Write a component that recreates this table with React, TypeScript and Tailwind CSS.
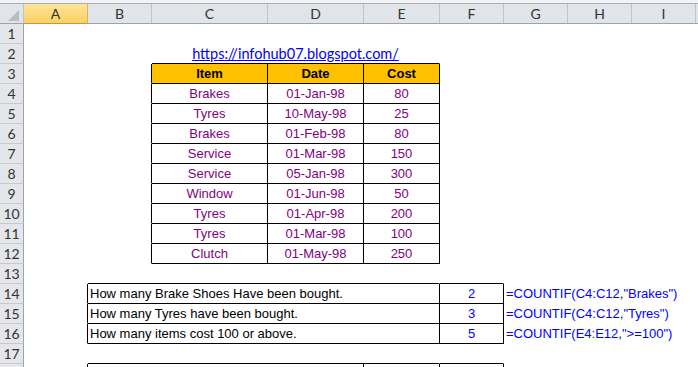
import React, { ReactNode } from "react";
import clsx from "clsx";

type CellProps = {
  w: string;
  r?: boolean;
  b?: boolean;
  bg?: string;
  cls?: string;
  children?: ReactNode;
};

const Cell = ({ w, r, b, bg = "", cls = "", children }: CellProps) => (
  <div
    className={clsx(
      "box-border h-full shrink-0 border-r border-b flex items-center",
      w,
      bg,
      r ? "border-r-black" : "border-r-transparent",
      b ? "border-b-black" : "border-b-transparent",
      cls
    )}
  >
    {children}
  </div>
);

const RowHdr = ({ n }: { n: number }) => (
  <div className="box-border h-full w-[24px] shrink-0 border-r border-b border-r-[#9ea3aa] border-b-[#c6cad0] bg-[#e4e6ea] flex items-center justify-center font-['Lato','Open_Sans',sans-serif] text-[14px] text-[#333]">
    {n}
  </div>
);

const Row = ({ n, children }: { n: number; children?: ReactNode }) => (
  <div className="flex h-[20px]">
    <RowHdr n={n} />
    {children}
    <div className="flex-1" />
  </div>
);

const dataFont = "font-['Liberation_Sans',Arial,sans-serif] text-[13px]";
const purple = "text-[#800080] justify-center";

const data = [
  ["Brakes", "01-Jan-98", "80"],
  ["Tyres", "10-May-98", "25"],
  ["Brakes", "01-Feb-98", "80"],
  ["Service", "01-Mar-98", "150"],
  ["Service", "05-Jan-98", "300"],
  ["Window", "01-Jun-98", "50"],
  ["Tyres", "01-Apr-98", "200"],
  ["Tyres", "01-Mar-98", "100"],
  ["Clutch", "01-May-98", "250"],
];

const questions = [
  ["How many Brake Shoes Have been bought.", "2", '=COUNTIF(C4:C12,"Brakes")'],
  ["How many Tyres have been bought.", "3", '=COUNTIF(C4:C12,"Tyres")'],
  ["How many items cost 100 or above.", "5", '=COUNTIF(E4:E12,">=100")'],
];

const colHdrs: [string, string][] = [
  ["B", "w-[64px]"],
  ["C", "w-[116px]"],
  ["D", "w-[96px]"],
  ["E", "w-[76px]"],
  ["F", "w-[64px]"],
  ["G", "w-[64px]"],
  ["H", "w-[64px]"],
  ["I", "w-[64px]"],
];

export default function App() {
  return (
    <div className={clsx("w-[698px] h-[367px] overflow-hidden bg-white", dataFont)}>
      <div className="h-[3px] bg-[#f2f3f5]" />
      {/* column header */}
      <div className="flex h-[21px] box-border border-t border-b border-t-[#a9adb3] border-b-[#9ea3aa] bg-[#e1e4e8] font-['Lato','Open_Sans',sans-serif] text-[14px] text-[#333]">
        <div className="relative box-border h-full w-[24px] shrink-0 border-r border-r-[#c0c4ca]">
          <svg className="absolute right-[4px] bottom-[2px]" width="11" height="11" viewBox="0 0 11 11">
            <polygon points="11,0 11,11 0,11" fill="#b9bdc3" />
          </svg>
        </div>
        <div className="box-border h-[20px] -mb-px w-[64px] shrink-0 border-r border-b border-r-[#dcb34f] border-b-[#c2993f] bg-gradient-to-b from-[#fde49a] to-[#fbd25f] flex items-center justify-center">
          A
        </div>
        {colHdrs.map(([l, w]) => (
          <div key={l} className={clsx("box-border h-full shrink-0 border-r border-r-[#c0c4ca] flex items-center justify-center", w)}>
            {l}
          </div>
        ))}
        <div className="flex-1" />
      </div>

      <Row n={1} />
      <Row n={2}>
        <Cell w="w-[64px]" />
        <Cell w="w-[64px]" />
        <Cell w="w-[288px]" b cls="justify-center items-end">
          <span className="font-['Lato','Open_Sans',sans-serif] text-[14.5px] text-[#0000ff] underline leading-[18px]">
            https://infohub07.blogspot.com/
          </span>
        </Cell>
      </Row>
      <Row n={3}>
        <Cell w="w-[64px]" />
        <Cell w="w-[64px]" r />
        <Cell w="w-[116px]" r b bg="bg-[#ffc000]" cls="justify-center font-bold text-black">Item</Cell>
        <Cell w="w-[96px]" r b bg="bg-[#ffc000]" cls="justify-center font-bold text-black">Date</Cell>
        <Cell w="w-[76px]" r b bg="bg-[#ffc000]" cls="justify-center font-bold text-black">Cost</Cell>
      </Row>
      {data.map(([item, date, cost], i) => (
        <Row key={i} n={4 + i}>
          <Cell w="w-[64px]" />
          <Cell w="w-[64px]" r />
          <Cell w="w-[116px]" r b cls={purple}>{item}</Cell>
          <Cell w="w-[96px]" r b cls={purple}>{date}</Cell>
          <Cell w="w-[76px]" r b cls={purple}>{cost}</Cell>
        </Row>
      ))}
      <Row n={13}>
        <Cell w="w-[64px]" />
        <Cell w="w-[352px]" b />
        <Cell w="w-[64px]" b />
      </Row>
      {questions.map(([q, n, f], i) => (
        <Row key={i} n={14 + i}>
          <Cell w="w-[64px]" r />
          <Cell w="w-[352px]" r b cls="pl-[2px] text-black whitespace-nowrap">{q}</Cell>
          <Cell w="w-[64px]" r b cls="justify-center text-[#0000ff]">{n}</Cell>
          <Cell w="w-[64px]" cls="pl-[2px] text-[#0000ff] whitespace-nowrap overflow-visible">{f}</Cell>
        </Row>
      ))}
      <Row n={17}>
        <Cell w="w-[64px]" />
        <Cell w="w-[352px]" b />
        <Cell w="w-[64px]" b />
      </Row>
      <Row n={18}>
        <Cell w="w-[64px]" r />
        <Cell w="w-[276px]" r b />
        <Cell w="w-[76px]" r b />
        <Cell w="w-[64px]" r b />
      </Row>
    </div>
  );
}
